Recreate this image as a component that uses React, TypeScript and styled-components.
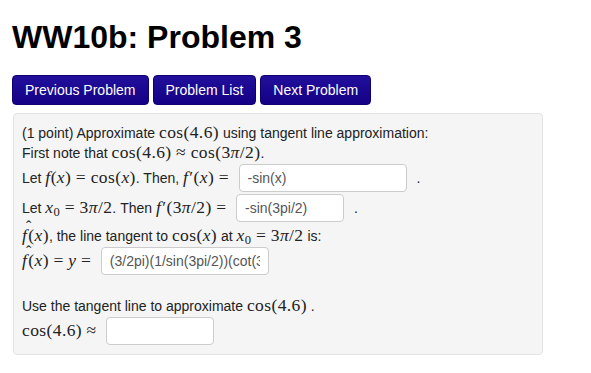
import styled, { createGlobalStyle } from 'styled-components';

const GlobalStyle = createGlobalStyle`
  body {
    margin: 0;
    background: #fff;
    color: #222;
    font-family: "Liberation Sans", Arial, sans-serif;
  }
`;

const Page = styled.div`
  padding: 17px 12px 0 12px;
`;

const Title = styled.h1`
  margin: 0;
  font-size: 32px;
  line-height: 40px;
  font-weight: bold;
  color: #000;
`;

const Nav = styled.div`
  display: flex;
  gap: 4px;
  margin-top: 18px;
`;

const NavButton = styled.button`
  font-family: inherit;
  font-size: 14px;
  line-height: 20px;
  padding: 4px 12px;
  border: 1px solid #0e0070;
  border-radius: 4px;
  color: #fff;
  background: linear-gradient(#22109c, #140085);
  cursor: pointer;
`;

const Well = styled.div`
  margin: 8px 0 0 1px;
  width: 530px;
  box-sizing: border-box;
  padding: 9px 8px 8px;
  background: #f5f5f5;
  border: 1px solid #e3e3e3;
  border-radius: 4px;
  font-size: 14px;
`;

const Line = styled.div<{ $h?: number; $bottom?: boolean }>`
  display: flex;
  align-items: ${p => (p.$bottom ? 'flex-end' : 'center')};
  height: ${p => p.$h ?? 20}px;
  white-space: nowrap;
`;

const Text = styled.span`
  line-height: 20px;
`;

const M = styled.span`
  font-family: "Liberation Serif", "Times New Roman", serif;
  font-size: 17.5px;
  letter-spacing: 0.4px;
  line-height: 1;
`;

const I = styled.i`
  font-style: italic;
`;

const Rel = styled.span`
  padding: 0 0.26em;
`;

const Sub = styled.sub`
  font-size: 0.72em;
  font-style: normal;
  vertical-align: -0.25em;
  line-height: 0;
`;

const Prime = styled.span`
  font-style: normal;
  margin-left: 1px;
`;

const HatBox = styled.span`
  position: relative;
  display: inline-block;
  margin-right: 1px;
  font-style: italic;
`;

const HatMark = styled.span`
  position: absolute;
  left: 4px;
  top: -8px;
  font-family: "Liberation Serif", serif;
  font-style: normal;
  font-size: 16px;
  line-height: 1;
`;

const Answer = styled.input<{ $w: number }>`
  width: ${p => p.$w}px;
  height: 28px;
  box-sizing: border-box;
  margin-left: 5px;
  padding: 0 8px;
  border: 1px solid #ccc;
  border-radius: 4px;
  background: #fff;
  color: #555;
  font-family: "Liberation Sans", Arial, sans-serif;
  font-size: 14px;
  outline: none;
`;

const Dot = styled.span`
  margin-left: 10px;
  line-height: 20px;
`;

const Hat = ({ children }: { children: string }) => (
  <HatBox>
    {children}
    <HatMark>ˆ</HatMark>
  </HatBox>
);

const Pi = () => <I>π</I>;

export default function App() {
  return (
    <Page>
      <GlobalStyle />
      <Title>WW10b: Problem 3</Title>
      <Nav>
        <NavButton>Previous Problem</NavButton>
        <NavButton>Problem List</NavButton>
        <NavButton>Next Problem</NavButton>
      </Nav>
      <Well>
        <Line>
          <Text>
            (1 point) Approximate <M>cos(4.6)</M> using tangent line approximation:
          </Text>
        </Line>
        <Line>
          <Text>
            First note that{' '}
            <M>
              cos(4.6)<Rel>≈</Rel>cos(3<Pi />/2)
            </M>
            .
          </Text>
        </Line>
        <Line $h={30}>
          <Text>
            Let{' '}
            <M>
              <I>f</I>(<I>x</I>)<Rel>=</Rel>cos(<I>x</I>)
            </M>
            . Then,{' '}
            <M>
              <I>f</I>
              <Prime>′</Prime>(<I>x</I>)<Rel>=</Rel>
            </M>
          </Text>
          <Answer $w={168} defaultValue="-sin(x)" />
          <Dot>.</Dot>
        </Line>
        <Line $h={30}>
          <Text>
            Let{' '}
            <M>
              <I>x</I>
              <Sub>0</Sub>
              <Rel>=</Rel>3<Pi />/2
            </M>
            . Then{' '}
            <M>
              <I>f</I>
              <Prime>′</Prime>(3<Pi />/2)<Rel>=</Rel>
            </M>
          </Text>
          <Answer $w={108} defaultValue="-sin(3pi/2)" />
          <Dot>.</Dot>
        </Line>
        <Line $h={23} $bottom>
          <Text>
            <M>
              <Hat>f</Hat>(<I>x</I>)
            </M>
            , the line tangent to{' '}
            <M>
              cos(<I>x</I>)
            </M>{' '}
            at{' '}
            <M>
              <I>x</I>
              <Sub>0</Sub>
              <Rel>=</Rel>3<Pi />/2
            </M>{' '}
            is:
          </Text>
        </Line>
        <Line $h={30}>
          <Text>
            <M>
              <Hat>f</Hat>(<I>x</I>)<Rel>=</Rel>
              <I>y</I>
              <Rel>=</Rel>
            </M>
          </Text>
          <Answer $w={168} defaultValue="(3/2pi)(1/sin(3pi/2))(cot(3pi/2))" />
        </Line>
        <Line />
        <Line>
          <Text>
            Use the tangent line to approximate <M>cos(4.6)</M> .
          </Text>
        </Line>
        <Line $h={30}>
          <Text>
            <M>
              cos(4.6)<Rel>≈</Rel>
            </M>
          </Text>
          <Answer $w={108} defaultValue="" />
        </Line>
      </Well>
    </Page>
  );
}
